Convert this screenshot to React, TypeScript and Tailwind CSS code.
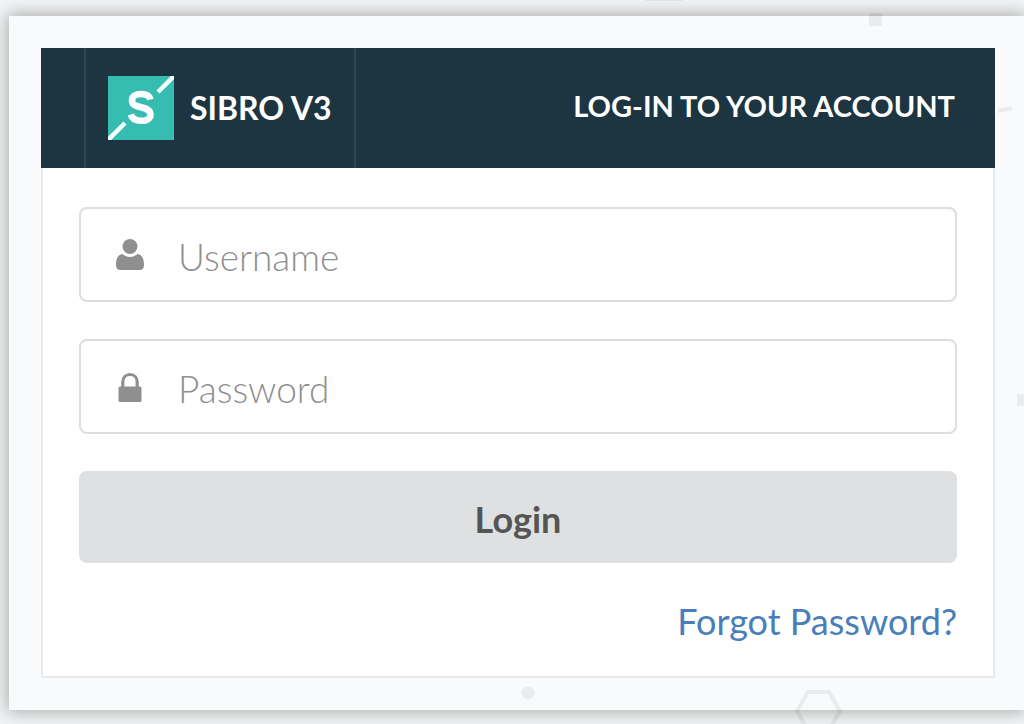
import React from 'react';

interface FieldProps {
  id: string;
  label: string;
  type: string;
  icon: React.ReactNode;
}

const Logo: React.FC = () => (
  <svg viewBox="0 0 66 64" className="h-16 w-[66px] shrink-0" aria-hidden="true">
    <rect width="66" height="64" fill="#37bcb2" />
    <path d="M67 -1L50 16M17 47L-1 65" stroke="#f4fffe" strokeWidth="4.500" />
    <path
      d="M42.500 23.500C41.500 19.500 38 18 33 18C27.500 18 24 20.500 24 24.500C24 29 28 30 33 31.200C38.500 32.500 42.500 34 42.500 38.700C42.500 42.500 38.800 44.800 33.500 44.800C27.500 44.800 24 42.500 22.800 38.500"
      fill="none"
      stroke="#fff"
      strokeWidth="6.600"
    />
  </svg>
);

const UserIcon: React.FC = () => (
  <svg viewBox="0 0 28 32" className="h-8 w-7" fill="#8f8f8f">
    <circle cx="14" cy="7.500" r="7.500" />
    <path d="M6.500 15C9 17 11.200 18 14 18S19 17 21.500 15C26 15.500 28 19.500 28 26C28 29.500 26.500 31 23.500 31H4.500C1.500 31 0 29.500 0 26C0 19.500 2 15.500 6.500 15Z" />
  </svg>
);

const LockIcon: React.FC = () => (
  <svg viewBox="0 0 28 32" className="h-8 w-7" fill="#8f8f8f">
    <path d="M6.800 16V11C6.800 6.500 9.800 3.500 14 3.500S21.200 6.500 21.200 11V16" fill="none" stroke="#8f8f8f" strokeWidth="3.200" />
    <rect x="2.500" y="15.500" width="23" height="15.500" rx="1.500" />
  </svg>
);

const Field: React.FC<FieldProps> = ({ id, label, type, icon }) => (
  <div className="flex h-[95px] items-center rounded-lg border-2 border-[#dedede] bg-white pl-[35px]">
    <label htmlFor={id} aria-label={label} className="shrink-0">
      {icon}
    </label>
    <input
      id={id}
      type={type}
      placeholder={label}
      className="ml-[34px] h-full min-w-0 flex-1 bg-transparent pt-1 text-[37px] font-light text-[#555] outline-none placeholder:text-[#8f8f8f]"
    />
  </div>
);

// faint shapes floating over the page background
const Decorations: React.FC = () => (
  <svg width="1024" height="724" className="pointer-events-none absolute left-0 top-0" aria-hidden="true">
    <g fill="#000" fillOpacity="0.060">
      <rect x="869" y="13" width="13" height="13" />
      <rect x="1017" y="394" width="13" height="12" />
      <circle cx="528" cy="693" r="6.500" />
      <rect x="645" y="-4" width="38" height="5" />
    </g>
    <g fill="none" stroke="#000" strokeOpacity="0.060" strokeWidth="4">
      <path d="M998 111L1012 108" />
      <path d="M808 692H829L840 711L829 730H808L797 711Z" />
    </g>
  </svg>
);

const App: React.FC = () => {
  return (
    <div className="relative min-h-screen overflow-hidden bg-[#f3f4f5] pb-[13px] pl-[9px] pt-4 font-['Lato',sans-serif]">
      <main className="bg-[#f8fafc] pb-8 pl-8 pr-[29px] pt-8 shadow-[0_0_16px_2px_rgba(0,0,0,0.300)]">
        <header className="flex h-[120px] items-center justify-between bg-[#1d3541] pl-[43px] pr-10 text-white">
          <div className="flex h-full items-center gap-4 border-x-2 border-[#2c4551] pl-[22px] pr-[22px]">
            <Logo />
            <span className="whitespace-nowrap text-[32px] font-bold">SIBRO V3</span>
          </div>
          <h1 className="whitespace-nowrap pb-1 text-[29px] font-bold">LOG-IN TO YOUR ACCOUNT</h1>
        </header>

        <form
          className="flex flex-col gap-[37px] border-2 border-t-0 border-[#e8eaec] bg-white px-9 pb-[34px] pt-[39px]"
          onSubmit={(e) => e.preventDefault()}
        >
          <Field id="username" label="Username" type="text" icon={<UserIcon />} />
          <Field id="password" label="Password" type="password" icon={<LockIcon />} />
          <button type="submit" className="h-[92px] rounded-lg bg-[#dfe0e2] pt-1 text-[36px] font-bold text-[#555]">
            Login
          </button>
          <a href="#forgot" className="self-end text-[36px] leading-[42px] text-[#4a7ebb]">
            Forgot Password?
          </a>
        </form>
      </main>
      <Decorations />
    </div>
  );
};

export default App;
